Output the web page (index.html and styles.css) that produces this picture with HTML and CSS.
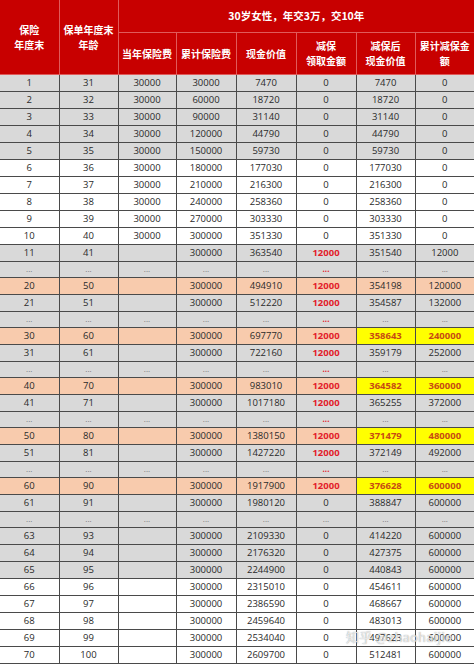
FILE: index.html
```html
<!DOCTYPE html>
<html lang="zh-CN">
<head>
<meta charset="utf-8">
<link rel="stylesheet" href="styles.css">
</head>
<body>
<div class="wrap">
<table class="sheet">
<colgroup>
<col class="w59"><col class="w59"><col class="w58"><col class="w60"><col class="w60"><col class="w60"><col class="w59"><col class="w59">
</colgroup>
<thead>
<tr class="h1">
<th rowspan="2">保险<br>年度末</th>
<th rowspan="2">保单年度末<br>年龄</th>
<th colspan="6" class="title">30岁女性，年交3万，交10年</th>
</tr>
<tr class="h2">
<th>当年保险费</th><th>累计保险费</th><th>现金价值</th><th>减保<br>领取金额</th><th>减保后<br>现金价值</th><th>累计减保金<br>额</th>
</tr>
</thead>
<tbody>
<tr class="g"><td>1</td><td>31</td><td>30000</td><td>30000</td><td>7470</td><td>0</td><td>7470</td><td>0</td></tr>
<tr class="g"><td>2</td><td>32</td><td>30000</td><td>60000</td><td>18720</td><td>0</td><td>18720</td><td>0</td></tr>
<tr class="g"><td>3</td><td>33</td><td>30000</td><td>90000</td><td>31140</td><td>0</td><td>31140</td><td>0</td></tr>
<tr class="g"><td>4</td><td>34</td><td>30000</td><td>120000</td><td>44790</td><td>0</td><td>44790</td><td>0</td></tr>
<tr class="g"><td>5</td><td>35</td><td>30000</td><td>150000</td><td>59730</td><td>0</td><td>59730</td><td>0</td></tr>
<tr><td>6</td><td>36</td><td>30000</td><td>180000</td><td>177030</td><td>0</td><td>177030</td><td>0</td></tr>
<tr><td>7</td><td>37</td><td>30000</td><td>210000</td><td>216300</td><td>0</td><td>216300</td><td>0</td></tr>
<tr><td>8</td><td>38</td><td>30000</td><td>240000</td><td>258360</td><td>0</td><td>258360</td><td>0</td></tr>
<tr><td>9</td><td>39</td><td>30000</td><td>270000</td><td>303330</td><td>0</td><td>303330</td><td>0</td></tr>
<tr><td>10</td><td>40</td><td>30000</td><td>300000</td><td>351330</td><td>0</td><td>351330</td><td>0</td></tr>
<tr class="g"><td>11</td><td>41</td><td></td><td>300000</td><td>363540</td><td class="red">12000</td><td>351540</td><td>12000</td></tr>
<tr class="g dots"><td>...</td><td>...</td><td>...</td><td>...</td><td>...</td><td class="red">...</td><td>...</td><td>...</td></tr>
<tr class="o"><td>20</td><td>50</td><td></td><td>300000</td><td>494910</td><td class="red">12000</td><td>354198</td><td>120000</td></tr>
<tr class="g"><td>21</td><td>51</td><td></td><td>300000</td><td>512220</td><td class="red">12000</td><td>354587</td><td>132000</td></tr>
<tr class="g dots"><td>...</td><td>...</td><td>...</td><td>...</td><td>...</td><td class="red">...</td><td>...</td><td>...</td></tr>
<tr class="o"><td>30</td><td>60</td><td></td><td>300000</td><td>697770</td><td class="red">12000</td><td class="y">358643</td><td class="y">240000</td></tr>
<tr class="g"><td>31</td><td>61</td><td></td><td>300000</td><td>722160</td><td class="red">12000</td><td>359179</td><td>252000</td></tr>
<tr class="g dots"><td>...</td><td>...</td><td>...</td><td>...</td><td>...</td><td class="red">...</td><td>...</td><td>...</td></tr>
<tr class="o"><td>40</td><td>70</td><td></td><td>300000</td><td>983010</td><td class="red">12000</td><td class="y">364582</td><td class="y">360000</td></tr>
<tr class="g"><td>41</td><td>71</td><td></td><td>300000</td><td>1017180</td><td class="red">12000</td><td>365255</td><td>372000</td></tr>
<tr class="g dots"><td>...</td><td>...</td><td>...</td><td>...</td><td>...</td><td class="red">...</td><td>...</td><td>...</td></tr>
<tr class="o"><td>50</td><td>80</td><td></td><td>300000</td><td>1380150</td><td class="red">12000</td><td class="y">371479</td><td class="y">480000</td></tr>
<tr class="g"><td>51</td><td>81</td><td></td><td>300000</td><td>1427220</td><td class="red">12000</td><td>372149</td><td>492000</td></tr>
<tr class="g dots"><td>...</td><td>...</td><td>...</td><td>...</td><td>...</td><td class="red">...</td><td>...</td><td>...</td></tr>
<tr class="o"><td>60</td><td>90</td><td></td><td>300000</td><td>1917900</td><td class="red">12000</td><td class="y">376628</td><td class="y">600000</td></tr>
<tr class="g"><td>61</td><td>91</td><td></td><td>300000</td><td>1980120</td><td>0</td><td>388847</td><td>600000</td></tr>
<tr class="g dots"><td>...</td><td>...</td><td>...</td><td>...</td><td>...</td><td>...</td><td>...</td><td>...</td></tr>
<tr class="g"><td>63</td><td>93</td><td></td><td>300000</td><td>2109330</td><td>0</td><td>414220</td><td>600000</td></tr>
<tr class="g"><td>64</td><td>94</td><td></td><td>300000</td><td>2176320</td><td>0</td><td>427375</td><td>600000</td></tr>
<tr class="g"><td>65</td><td>95</td><td></td><td>300000</td><td>2244900</td><td>0</td><td>440843</td><td>600000</td></tr>
<tr><td>66</td><td>96</td><td></td><td>300000</td><td>2315010</td><td>0</td><td>454611</td><td>600000</td></tr>
<tr><td>67</td><td>97</td><td></td><td>300000</td><td>2386590</td><td>0</td><td>468667</td><td>600000</td></tr>
<tr><td>68</td><td>98</td><td></td><td>300000</td><td>2459640</td><td>0</td><td>483013</td><td>600000</td></tr>
<tr><td>69</td><td>99</td><td></td><td>300000</td><td>2534040</td><td>0</td><td>497623</td><td>600000</td></tr>
<tr><td>70</td><td>100</td><td></td><td>300000</td><td>2609700</td><td>0</td><td>512481</td><td>600000</td></tr>
</tbody>
</table>
<div class="mark">知乎 @zhaohaijie</div>
</div>
</body>
</html>
```

FILE: styles.css
```css
html, body {
  margin: 0;
  padding: 0;
  background: #ffffff;
}
.wrap {
  position: relative;
  width: 474px;
  height: 665px;
  overflow: hidden;
}
.sheet {
  width: 474px;
  border-collapse: collapse;
  table-layout: fixed;
  font-family: "Open Sans", "Liberation Sans", "Noto Sans CJK SC", sans-serif;
}
.w58 { width: 58px; }
.w59 { width: 59px; }
.w60 { width: 60px; }
.sheet th {
  background: #c80000;
  color: #ffffff;
  font-family: "Noto Sans CJK SC", sans-serif;
  font-weight: 700;
  font-size: 10px;
  line-height: 15px;
  border: 1px solid #e05a5a;
  padding: 0;
  text-align: center;
  vertical-align: middle;
  border-top: none;
}
.sheet th:first-child { border-left: none; }
.sheet th:last-child { border-right: none; }
.sheet .h1 { height: 32px; }
.sheet .h2 { height: 42px; }
.sheet th.title {
  font-size: 10.5px;
  border-right: none;
}
.sheet td {
  height: 16px;
  padding: 0;
  border: 1px solid #4a4a4a;
  text-align: center;
  vertical-align: middle;
  font-size: 9.5px;
  line-height: 12px;
  color: #2a2a2a;
  white-space: nowrap;
}
.sheet td:first-child { border-left: none; }
.sheet td:last-child { border-right: none; }
.sheet tr.g td { background: #d9d9d9; }
.sheet tr.o td { background: #f8cbad; }
.sheet td.red {
  color: #e3202a;
  font-weight: 700;
}
.sheet tr td.y {
  background: #ffff00;
  color: #c84a14;
  font-weight: 700;
}
.sheet tr.dots td {
  height: 15px;
  color: #777777;
  font-size: 8px;
}
.sheet tr.dots td.red { color: #e3202a; }
.mark {
  position: absolute;
  left: 346px;
  top: 629px;
  font-family: "Noto Sans CJK SC", "Open Sans", sans-serif;
  font-size: 13px;
  line-height: 16px;
  color: rgba(255, 255, 255, 0.75);
  text-shadow: 0 0 1px rgba(90, 90, 90, 0.7);
  letter-spacing: 0.2px;
}
```
